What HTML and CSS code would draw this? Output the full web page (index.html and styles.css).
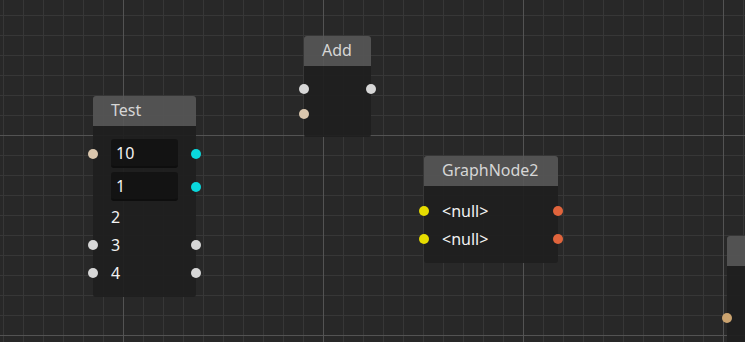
FILE: index.html
```html
<!DOCTYPE html>
<html>
<head>
<meta charset="utf-8">
<link rel="stylesheet" href="styles.css">
</head>
<body>
<div class="canvas">
  <div class="node node-test">
    <div class="title">Test</div>
    <div class="body">
      <div class="row row-le"><span class="port l tan"></span><div class="edit">10</div><span class="port r cyan"></span></div>
      <div class="row row-le"><div class="edit">1</div><span class="port r cyan"></span></div>
      <div class="row row-lbl"><span class="lbl">2</span></div>
      <div class="row row-lbl"><span class="port l white"></span><span class="lbl">3</span><span class="port r white"></span></div>
      <div class="row row-lbl"><span class="port l white"></span><span class="lbl">4</span><span class="port r white"></span></div>
    </div>
  </div>

  <div class="node node-add">
    <div class="title">Add</div>
    <div class="body">
      <div class="row row-a1"><span class="port l white"></span><span class="port r white"></span></div>
      <div class="row row-a2"><span class="port l tan"></span></div>
    </div>
  </div>

  <div class="node node-g2">
    <div class="title">GraphNode2</div>
    <div class="body">
      <div class="row row-lbl"><span class="port l yellow"></span><span class="lbl">&lt;null&gt;</span><span class="port r orange"></span></div>
      <div class="row row-lbl"><span class="port l yellow"></span><span class="lbl">&lt;null&gt;</span><span class="port r orange"></span></div>
    </div>
  </div>

  <div class="node node-edge">
    <div class="title">&nbsp;</div>
    <div class="body">
      <div class="row row-edge"><span class="port l gold"></span></div>
    </div>
  </div>
</div>
</body>
</html>
```

FILE: styles.css
```css
html, body {
  margin: 0;
  padding: 0;
  background: #282828;
}

.canvas {
  position: relative;
  width: 745px;
  height: 342px;
  overflow: hidden;
  background-color: #282828;
  background-image:
    linear-gradient(to right, #535353 0, #535353 1px, transparent 1px),
    linear-gradient(to bottom, #535353 0, #535353 1px, transparent 1px),
    linear-gradient(to right, #373737 0, #373737 1px, transparent 1px),
    linear-gradient(to bottom, #373737 0, #373737 1px, transparent 1px);
  background-size: 200px 200px, 200px 200px, 20px 20px, 20px 20px;
  background-position: 123px 0, 0 135px, 3px 0, 0 15px;
  font-family: "Noto Sans", "Open Sans", sans-serif;
  font-size: 16px;
}

.node {
  position: absolute;
  display: flex;
  flex-direction: column;
}

.node-test { left: 93px; top: 96px; width: 103px; }
.node-add { left: 304px; top: 36px; width: 67px; }
.node-g2 { left: 424px; top: 156px; width: 134px; }
.node-edge { left: 727px; top: 236px; width: 60px; }

.title {
  height: 30px;
  line-height: 29px;
  padding-left: 18px;
  background: rgba(88, 88, 88, 0.88);
  border-radius: 3px 3px 0 0;
  color: #d6d6d6;
  white-space: nowrap;
}

.body {
  background: rgba(30, 30, 30, 0.92);
  padding: 13px 18px 12px 18px;
  display: flex;
  flex-direction: column;
  gap: 4px;
  border-radius: 0 0 3px 3px;
}

.row {
  position: relative;
  display: flex;
  align-items: center;
}

.row-le { height: 29px; }
.row-lbl { height: 24px; }
.row-a1 { height: 20px; }
.row-a2 { height: 22px; }
.row-edge { height: 80px; }

.edit {
  flex: 1;
  height: 29px;
  box-sizing: border-box;
  background: rgba(18, 18, 18, 0.85);
  border-radius: 3px;
  border-bottom: 2px solid #0e0e0e;
  color: #f2f2f2;
  padding-left: 5px;
  line-height: 28px;
}

.lbl {
  color: #f2f2f2;
  line-height: 24px;
}

.port {
  position: absolute;
  width: 10px;
  height: 10px;
  border-radius: 50%;
  top: 50%;
  margin-top: -5px;
}
.port.l { left: -23px; }
.port.r { right: -23px; }
.row-edge .port { top: 34px; margin-top: 0; }

.white { background: #d7d7d7; }
.tan { background: #dac6ad; }
.cyan { background: #0ad8dc; }
.yellow { background: #e6dc00; }
.orange { background: #e0643c; }
.gold { background: #cba36f; }
```
